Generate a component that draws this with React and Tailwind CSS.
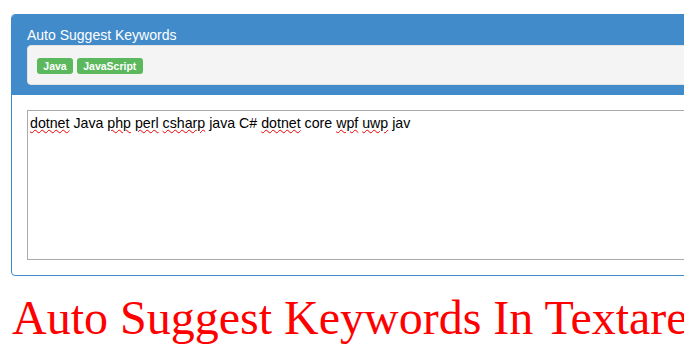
export default function App() {
  const words = [
    ["dotnet", true],
    ["Java", false],
    ["php", true],
    ["perl", true],
    ["csharp", true],
    ["java", false],
    ["C#", false],
    ["dotnet", true],
    ["core", false],
    ["wpf", true],
    ["uwp", true],
    ["jav", false],
  ];
  return (
    <div className="w-[684px] h-[359px] overflow-hidden bg-white" style={{ fontFamily: '"Liberation Sans", Arial, sans-serif' }}>
      <div className="w-[1000px] pt-[14px] pl-[11px]">
        <div className="border border-[#428bca] rounded-[4px] bg-white">
          <div className="bg-[#428bca] px-[15px] py-[10px] rounded-t-[3px]">
            <div className="text-white text-[14px] leading-[20px]">Auto Suggest Keywords</div>
            <div className="bg-[#f4f4f4] border border-[#e3e3e3] rounded-[4px] h-[40px] pl-[9px] pt-[12px]">
              <div className="flex gap-[4px]">
                <span className="bg-[#5cb85c] text-white font-bold text-[10.5px] leading-none rounded-[3px] pt-[2.5px] pb-[3px] px-[6.3px]">Java</span>
                <span className="bg-[#5cb85c] text-white font-bold text-[10.5px] leading-none rounded-[3px] pt-[2.5px] pb-[3px] px-[6.3px]">JavaScript</span>
              </div>
            </div>
          </div>
          <div className="p-[15px]">
            <div className="border border-[#a9a9a9] h-[150px] px-[2px] pt-[4px] text-[14.2px] text-black leading-[17px]">
              {words.map(([w, u], i) => (
                <span key={i}>
                  {u ? (
                    <span className="underline decoration-wavy decoration-[#e00] decoration-[1px] underline-offset-[1px]">{w}</span>
                  ) : (
                    w
                  )}
                  {i < words.length - 1 ? " " : ""}
                </span>
              ))}
            </div>
          </div>
        </div>
      </div>
      <h1
        className="mt-[15px] pl-[12px] text-[48px] leading-[53px] text-[#ff0000] whitespace-nowrap font-normal"
        style={{ fontFamily: '"Liberation Serif", "Times New Roman", serif' }}
      >
        Auto Suggest Keywords In Textarea
      </h1>
    </div>
  );
}
